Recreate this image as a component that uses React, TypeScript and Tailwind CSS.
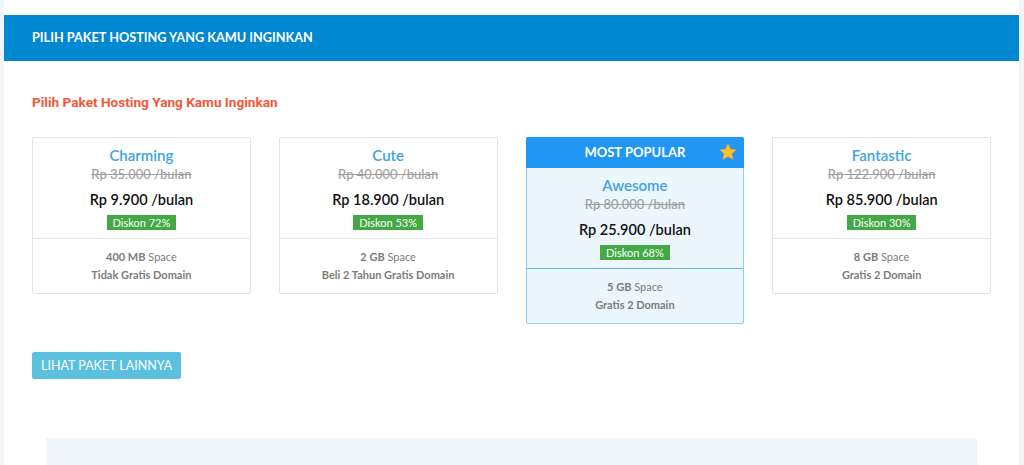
import React from 'react';

type Plan = {
	name: string;
	oldPrice: string;
	price: string;
	discount: string;
	space: string;
	domain: string;
	popular?: boolean;
};

const plans: Plan[] = [
	{ name: 'Charming', oldPrice: 'Rp 35.000 /bulan', price: 'Rp 9.900 /bulan', discount: 'Diskon 72%', space: '400 MB', domain: 'Tidak Gratis Domain' },
	{ name: 'Cute', oldPrice: 'Rp 40.000 /bulan', price: 'Rp 18.900 /bulan', discount: 'Diskon 53%', space: '2 GB', domain: 'Beli 2 Tahun Gratis Domain' },
	{ name: 'Awesome', oldPrice: 'Rp 80.000 /bulan', price: 'Rp 25.900 /bulan', discount: 'Diskon 68%', space: '5 GB', domain: 'Gratis 2 Domain', popular: true },
	{ name: 'Fantastic', oldPrice: 'Rp 122.900 /bulan', price: 'Rp 85.900 /bulan', discount: 'Diskon 30%', space: '8 GB', domain: 'Gratis 2 Domain' },
];

const Star = () => (
	<svg width="20" height="20" viewBox="0 0 24 24" className="absolute right-[6px] top-[5px]">
		<path
			d="M12 2.5l2.9 6.1 6.6.8-4.9 4.6 1.3 6.6L12 17.3l-5.9 3.3 1.3-6.6-4.9-4.6 6.6-.8z"
			fill="#fbc02d"
			stroke="#f9a825"
			strokeWidth="0.8"
			strokeLinejoin="round"
		/>
	</svg>
);

const PlanCard: React.FC<{ plan: Plan }> = ({ plan }) => {
	const border = plan.popular ? 'border-[#90caf9] bg-[#ebf6fd]' : 'border-[#e3e3e3] bg-white';
	return (
		<div className={`self-start rounded-[2px] border text-center ${border}`}>
			{plan.popular && (
				<div className="relative -mx-px -mt-px h-[31px] rounded-t-[2px] bg-[#2196f3] text-[13px] font-bold leading-[31px] text-white">
					MOST POPULAR
					<Star />
				</div>
			)}
			<div className="px-2 pt-[7px] pb-[8px]">
				<div className="text-[15px] font-semibold leading-[20px] text-[#3ea4dc]">{plan.name}</div>
				<div className="text-[13px] font-medium leading-[18px] text-[#a0a0a0] line-through">{plan.oldPrice}</div>
				<div className="mt-[7px] text-[14.5px] font-semibold leading-[20px] text-[#111]">{plan.price}</div>
				<div className="mt-[5px] flex justify-center">
					<span className="bg-[#43a944] px-[6px] text-[11px] leading-[15px] text-white">{plan.discount}</span>
				</div>
			</div>
			<div
				className={`border-t pt-[9px] pb-[9px] text-[11px] leading-[18px] text-[#7c7c7c] ${
					plan.popular ? 'border-[#64b5f6]' : 'border-[#e6e6e6]'
				}`}
			>
				<div>
					<span className="font-bold">{plan.space}</span> Space
				</div>
				<div className="font-bold">{plan.domain}</div>
			</div>
		</div>
	);
};

export default function App() {
	return (
		<div className="h-[465px] overflow-hidden bg-[#f2f5f8] px-[4px] pr-[5px] font-['Lato','Noto_Sans',sans-serif]">
			<div className="h-full bg-white pt-[15px]">
				<div className="flex h-[46px] items-center bg-[#0288d1] px-[28px] text-[12.7px] font-bold text-white">
					PILIH PAKET HOSTING YANG KAMU INGINKAN
				</div>
				<div className="px-[28px]">
					<h2 className="mt-[32px] font-['Roboto',sans-serif] text-[13.6px] font-bold leading-[18px] text-[#f4583a]">
						Pilih Paket Hosting Yang Kamu Inginkan
					</h2>
					<div className="mt-[26px] grid grid-cols-4 gap-[28px]">
						{plans.map((p) => (
							<PlanCard key={p.name} plan={p} />
						))}
					</div>
					<button className="mt-[28px] h-[27px] rounded-[2px] bg-[#5bc0de] px-[9px] text-[12.5px] leading-[27px] text-white">
						LIHAT PAKET LAINNYA
					</button>
				</div>
				<div className="mx-[42px] mt-[59px] h-[40px] w-[931px] bg-[#f1f6fa]" />
			</div>
		</div>
	);
}
